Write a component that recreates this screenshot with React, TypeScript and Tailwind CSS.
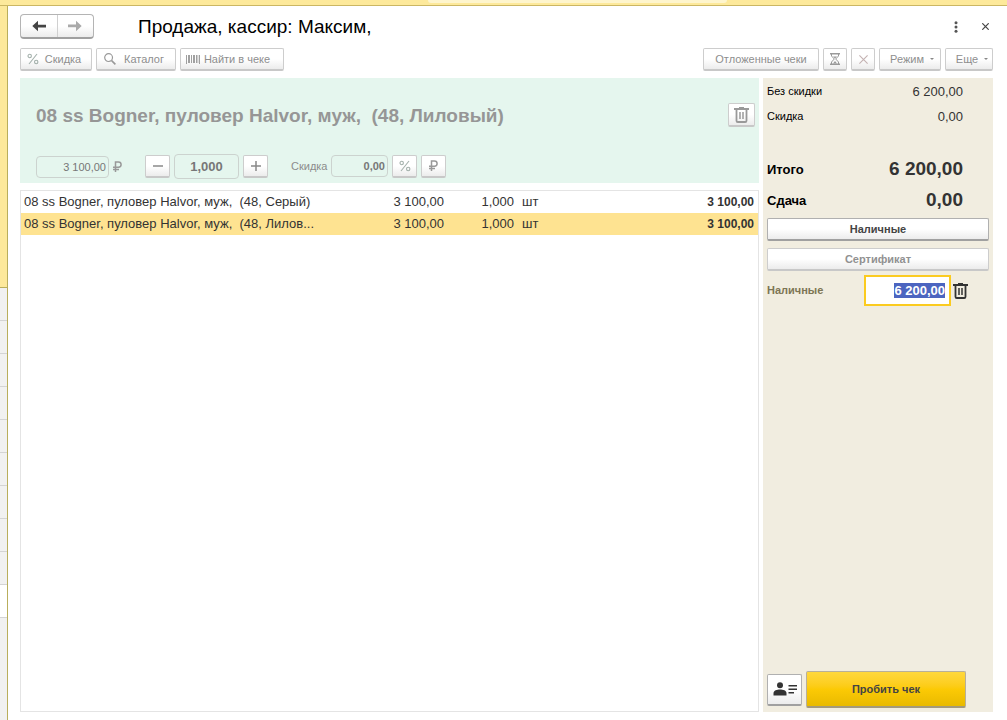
import { useEffect, useRef, type ReactNode } from "react";
import clsx from "clsx";

interface ReceiptLine {
  name: string;
  price: string;
  qty: string;
  unit: string;
  total: string;
  selected?: boolean;
}

const LINES: ReceiptLine[] = [
  {
    name: "08 ss Bogner, пуловер Halvor, муж,  (48, Серый)",
    price: "3 100,00",
    qty: "1,000",
    unit: "шт",
    total: "3 100,00",
  },
  {
    name: "08 ss Bogner, пуловер Halvor, муж,  (48, Лилов...",
    price: "3 100,00",
    qty: "1,000",
    unit: "шт",
    total: "3 100,00",
    selected: true,
  },
];

// section rows under the yellow part of the left strip
const STRIP_ROWS = [false, false, false, false, false, false, false, false, false, true];

const BTN =
  "flex shrink-0 items-center justify-center rounded-xs border border-b-2 bg-linear-to-b from-white from-50% to-[#ececec]";
const BTN_LIGHT = "border-[#cdcdcd] border-b-[#c8c8c8]";
const BTN_DARK = "border-[#b0b0b0] border-b-[#a0a0a0]";

interface ButtonProps {
  className?: string;
  label?: string;
  children: ReactNode;
}

function ToolButton({ className, label, children }: ButtonProps) {
  return (
    <button
      type="button"
      aria-label={label}
      className={clsx(BTN, BTN_LIGHT, "h-[23px] text-[11px] text-[#8e8e8e]", className)}
    >
      {children}
    </button>
  );
}

function PercentIcon() {
  return (
    <svg width="12" height="12" viewBox="0 0 12 12" fill="none" stroke="#a3b0ab" strokeWidth="1.1">
      <circle cx="2.7" cy="3" r="1.7" />
      <circle cx="9.2" cy="9" r="1.7" />
      <path d="M10 1 2 11" />
    </svg>
  );
}

function RubleIcon() {
  return (
    <svg width="9" height="11" viewBox="0 0 9 11" fill="none" stroke="#999" strokeWidth="1.5">
      <path d="M2.5 11V1h3a2.2 2.2 0 0 1 0 5.2H0M0 8.6h6" />
    </svg>
  );
}

function TrashIcon({ color }: { color: string }) {
  return (
    <svg width="15" height="16" viewBox="0 0 15 16" fill="none" stroke={color}>
      <path d="M0 2h15M5 1h5" strokeWidth="2" />
      <path d="M2.500 3v10.700q0 1.300 1.300 1.300h7.400q1.300 0 1.300-1.300V3" strokeWidth="1.800" />
      <path d="M6 5v7M9 5v7" strokeWidth="1.500" />
    </svg>
  );
}

function Arrow({ color, flip }: { color: string; flip?: boolean }) {
  return (
    <svg width="14" height="12" viewBox="0 0 14 12" className={clsx(flip && "rotate-180")}>
      <path d="M6 .8 .3 6 6 11.2V7.400h8V4.700H6z" fill={color} />
    </svg>
  );
}

function Caret() {
  return (
    <svg width="4" height="2" viewBox="0 0 4 2">
      <path d="M0 0h4L2 2z" fill="#888" />
    </svg>
  );
}

function Header() {
  return (
    <header className="flex items-center pt-2">
      <div className="flex h-[25px] w-[74px] overflow-hidden rounded-sm border border-b-2 border-[#b4b4b4] border-b-[#a0a0a0] bg-linear-to-b from-white from-50% to-[#ececec]">
        <button type="button" aria-label="Назад" className="flex flex-1 items-center justify-center border-r border-[#d0d0d0]">
          <Arrow color="#444" />
        </button>
        <button type="button" aria-label="Вперед" className="flex flex-1 items-center justify-center">
          <Arrow color="#aaa" flip />
        </button>
      </div>
      <h1 className="ml-11 flex-1 text-[19px] leading-6 text-black">Продажа, кассир: Максим,</h1>
      <button type="button" aria-label="Меню" className="mr-6">
        <svg width="4" height="12" viewBox="0 0 4 12" fill="#555">
          <circle cx="2" cy="1.700" r="1.500" />
          <circle cx="2" cy="6" r="1.500" />
          <circle cx="2" cy="10.300" r="1.500" />
        </svg>
      </button>
      <button type="button" aria-label="Закрыть" className="mr-1">
        <svg width="7" height="7" viewBox="0 0 7 7" stroke="#444" strokeWidth="1.200">
          <path d="m.3.3 6.400 6.400M6.700.3.3 6.700" />
        </svg>
      </button>
    </header>
  );
}

function Toolbar() {
  return (
    <div className="mt-[9px] flex gap-1">
      <ToolButton className="w-[72px] gap-1.5 pr-1">
        <PercentIcon />
        Скидка
      </ToolButton>
      <ToolButton className="w-20 gap-2 pr-1">
        <svg width="12" height="12" viewBox="0 0 12 12" fill="none" stroke="#999">
          <circle cx="4.600" cy="4.600" r="3.900" strokeWidth="1.200" />
          <path d="m7.600 7.600 3.800 3.800" strokeWidth="1.600" />
        </svg>
        Каталог
      </ToolButton>
      <ToolButton className="w-[104px] gap-1 pr-2">
        <svg width="14" height="9" viewBox="0 0 14 9" fill="#a0a0a0">
          <path d="M0 0h1v9H0zM2 0h2v8H2zM5 0h1v8H5zM7 0h2v8H7zM10 0h1v8h-1zM11.500 0h.8v8h-.8zM13 0h1v9h-1z" />
        </svg>
        Найти в чеке
      </ToolButton>
      <div className="flex-1" />
      <ToolButton className="w-[116px]">Отложенные чеки</ToolButton>
      <ToolButton className="w-6" label="Отложить чек">
        <svg width="10" height="12" viewBox="0 0 10 12" fill="none" stroke="#999">
          <path d="M0 .8h10M0 11.200h10" strokeWidth="1.400" />
          <path d="M1.500 1v2L4.300 6 1.500 9v2M8.500 1v2L5.700 6l2.800 3v2" />
          <path d="M3 3.500h4L5 5.500zM3 10.500 5 8l2 2.500z" fill="#999" stroke="none" />
        </svg>
      </ToolButton>
      <ToolButton className="w-6" label="Отменить чек">
        <svg width="9" height="9" viewBox="0 0 9 9" stroke="#c4b2b2" strokeWidth="1.100">
          <path d="m.4.4 8.200 8.200M8.600.4.4 8.600" />
        </svg>
      </ToolButton>
      <ToolButton className="w-[62px] gap-1.5 pl-1">
        Режим
        <Caret />
      </ToolButton>
      <ToolButton className="w-12 gap-1.5 pl-1.5">
        Еще
        <Caret />
      </ToolButton>
    </div>
  );
}

function CurrentItem() {
  const field = "rounded-sm border border-[#ccd3cf] bg-transparent text-[#777]";
  const small = clsx(BTN, BTN_LIGHT, "h-[23px] w-[25px]");
  return (
    <section className="bg-[#e5f6ee] pt-6 pr-1 pb-1 pl-4">
      <div className="flex items-center">
        <h2 className="flex-1 pt-0.5 text-[19px] leading-6 font-bold whitespace-pre text-[#969696]">
          08 ss Bogner, пуловер Halvor, муж,{"  "}(48, Лиловый)
        </h2>
        <button type="button" aria-label="Удалить позицию" className={clsx(BTN, BTN_LIGHT, "h-6 w-[27px]")}>
          <TrashIcon color="#999" />
        </button>
      </div>
      <div className="mt-[25px] flex h-[26px] items-center">
        <input
          aria-label="Цена"
          defaultValue="3 100,00"
          className={clsx(field, "mt-0.5 h-[22px] w-[73px] px-0.5 text-right text-[11px]")}
        />
        <span className="ml-1">
          <RubleIcon />
        </span>
        <button type="button" aria-label="Меньше" className={clsx(small, "ml-[23px]")}>
          <svg width="10" height="10" viewBox="0 0 10 10" stroke="#888" strokeWidth="1.500">
            <path d="M0 5h10" />
          </svg>
        </button>
        <input
          aria-label="Количество"
          defaultValue="1,000"
          className={clsx(field, "ml-1 h-[25px] w-[65px] text-center text-[13px] font-bold")}
        />
        <button type="button" aria-label="Больше" className={clsx(small, "ml-1")}>
          <svg width="10" height="10" viewBox="0 0 10 10" stroke="#888" strokeWidth="1.500">
            <path d="M5 0v10M0 5h10" />
          </svg>
        </button>
        <label htmlFor="discount" className="ml-[23px] w-10 text-[11px] text-[#8c8c8c]">
          Скидка
        </label>
        <input
          id="discount"
          defaultValue="0,00"
          className={clsx(field, "h-[22px] w-[57px] px-0.5 text-right text-[11px] font-bold")}
        />
        <button type="button" aria-label="Скидка в процентах" className={clsx(small, "ml-1")}>
          <PercentIcon />
        </button>
        <button type="button" aria-label="Скидка в рублях" className={clsx(small, "ml-1")}>
          <RubleIcon />
        </button>
      </div>
    </section>
  );
}

function ReceiptTable() {
  return (
    <div className="mt-[7px] flex-1 border border-[#e4e4e4] bg-white">
      <table className="w-full table-fixed text-[13px] leading-[22px] text-[#333]">
        <colgroup>
          <col className="w-[302px]" />
          <col className="w-[121px]" />
          <col className="w-[70px]" />
          <col className="w-10" />
          <col />
        </colgroup>
        <tbody>
          {LINES.map((line) => (
            <tr key={line.name} className={clsx("h-[22px]", line.selected && "bg-[#fee391]")}>
              <td className="p-0 pl-[3px] whitespace-pre">{line.name}</td>
              <td className="p-0 text-right">{line.price}</td>
              <td className="p-0 text-right">{line.qty}</td>
              <td className="p-0 pl-2">{line.unit}</td>
              <td className="p-0 pr-1 text-right text-[12px] leading-[22px] font-bold">{line.total}</td>
            </tr>
          ))}
        </tbody>
      </table>
    </div>
  );
}

function Payment() {
  const cashRef = useRef<HTMLInputElement>(null);

  // the amount is ready to be typed over
  useEffect(() => {
    cashRef.current?.focus();
    cashRef.current?.select();
  }, []);

  return (
    <aside className="flex w-[230px] shrink-0 flex-col bg-[#f1ede0] px-1 pt-px pb-1">
      <dl className="pr-[26px] text-black">
        <div className="flex h-[25px] items-center justify-between">
          <dt className="text-[11px]">Без скидки</dt>
          <dd className="text-[13px] text-[#333]">6 200,00</dd>
        </div>
        <div className="flex h-[25px] items-center justify-between">
          <dt className="text-[11px]">Скидка</dt>
          <dd className="text-[13px] text-[#333]">0,00</dd>
        </div>
        <div className="mt-[25px] flex h-[31px] items-center justify-between font-bold">
          <dt className="text-[13px]">Итого</dt>
          <dd className="text-[19px] text-[#333]">6 200,00</dd>
        </div>
        <div className="flex h-[31px] items-center justify-between font-bold">
          <dt className="text-[13px]">Сдача</dt>
          <dd className="text-[19px] text-[#333]">0,00</dd>
        </div>
      </dl>
      <button type="button" className={clsx(BTN, BTN_DARK, "mt-0.5 h-[23px] text-[11px] font-bold text-[#444]")}>
        Наличные
      </button>
      <button type="button" className={clsx(BTN, BTN_LIGHT, "mt-[7px] h-[23px] text-[11px] font-bold text-[#919191]")}>
        Сертификат
      </button>
      <div className="mt-1 flex items-center">
        <label htmlFor="cash" className="flex-1 text-[11px] font-bold text-[#7d7554]">
          Наличные
        </label>
        <input
          id="cash"
          ref={cashRef}
          defaultValue="6 200,00"
          className="h-[31px] w-[87px] border-2 border-[#fbcb20] bg-white pr-1 text-right text-[13px] font-bold text-[#333] outline-none selection:bg-[#4c65c0] selection:text-white"
        />
        <button type="button" aria-label="Удалить оплату" className="mr-[21px] ml-0.5">
          <TrashIcon color="#333" />
        </button>
      </div>
      <div className="flex-1" />
      <div className="flex items-center gap-1">
        <button type="button" aria-label="Покупатель" className={clsx(BTN, BTN_DARK, "h-8 w-[35px]")}>
          <svg width="24" height="14" viewBox="0 0 24 14" fill="#333">
            <circle cx="7" cy="3.300" r="3" />
            <path d="M.5 13.500v-2.300C.5 8.500 4 7.600 7 7.600s6.500.9 6.500 3.600v2.300zM15.500 3H24v1.500h-8.500zM15.500 6.500H24V8h-8.500zM15.500 10H21v1.500h-5.500z" />
          </svg>
        </button>
        <button
          type="button"
          className="h-[37px] w-40 rounded-xs border border-b-2 border-[#b8b09a] border-b-[#a39a7c] bg-linear-to-b from-[#ffd83c] via-[#fcca05] to-[#e9ba00] text-[11px] font-bold text-[#444]"
        >
          Пробить чек
        </button>
      </div>
    </aside>
  );
}

export default function App() {
  return (
    <div className="flex h-screen flex-col bg-white font-['Liberation_Sans',Arial,sans-serif]">
      <div className="flex h-1.5 shrink-0 justify-center border-b border-[#cbb663] bg-[#fde99b]">
        <div className="ml-[147px] h-[3px] w-[299px] rounded-b-sm bg-[#fef5cd]" />
      </div>
      <div className="flex min-h-0 flex-1">
        <div className="flex w-2 shrink-0 flex-col border-r border-[#b9ae5c] bg-[#f1f1f1]">
          <div className="h-[282px] shrink-0 border-b border-[#b9ae5c] bg-[#fde99b]" />
          {STRIP_ROWS.map((active, i) => (
            <div key={i} className={clsx("h-[33px] shrink-0 border-b border-[#d4d4d4]", active && "bg-white")} />
          ))}
        </div>
        <main className="flex min-w-0 flex-1 flex-col pr-3.5 pb-2 pl-3">
          <Header />
          <Toolbar />
          <div className="mt-[7px] flex min-h-0 flex-1 gap-1">
            <div className="flex min-w-0 flex-1 flex-col">
              <CurrentItem />
              <ReceiptTable />
            </div>
            <Payment />
          </div>
        </main>
      </div>
    </div>
  );
}
